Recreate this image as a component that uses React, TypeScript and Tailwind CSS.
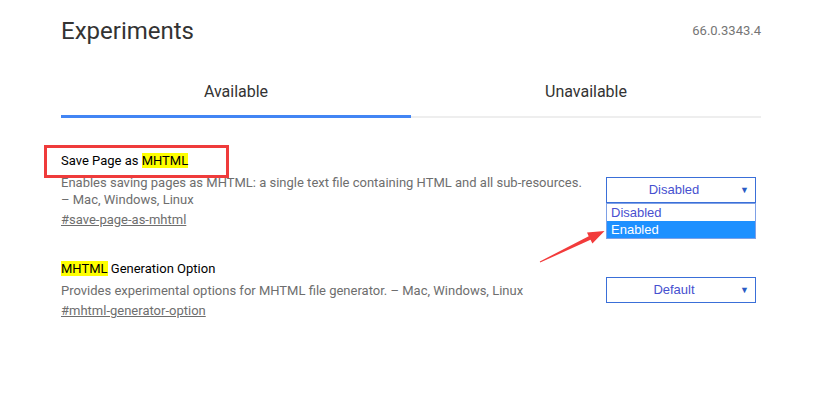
import React from 'react';

const experiments = [
  {
    id: 'save-page-as-mhtml',
    title: (
      <>
        Save Page as <mark className="bg-[#ffff00] text-black">MHTML</mark>
      </>
    ),
    desc: 'Enables saving pages as MHTML: a single text file containing HTML and all sub-resources.',
    value: 'Disabled',
    open: true,
  },
  {
    id: 'mhtml-generator-option',
    title: (
      <>
        <mark className="bg-[#ffff00] text-black">MHTML</mark> Generation Option
      </>
    ),
    desc: 'Provides experimental options for MHTML file generator.',
    value: 'Default',
    open: false,
  },
];

const Select = ({ value, open }: { value: string; open: boolean }) => (
  <div className="relative w-[150px] font-['Liberation_Sans',Arial,sans-serif] text-[13px]">
    <div className="h-[26px] pr-[14px] border-[1.5px] border-[#3a6fd8] bg-white flex items-center justify-center text-[#4650cf]">
      <span>{value}</span>
      <span className="absolute right-[7px] top-[7px] text-[9px] text-[#2a5bc4]">▼</span>
    </div>
    {open && (
      <div className="absolute left-0 top-[26px] w-[150px] border border-[#7ea0e6] bg-white z-10">
        <div className="h-[17px] leading-[17px] px-[4px] text-[#4a4fd0]">Disabled</div>
        <div className="h-[17px] leading-[17px] px-[4px] bg-[#1e90ff] text-white">Enabled</div>
      </div>
    )}
  </div>
);

const App = () => {
  return (
    <div className="relative w-[818px] h-[418px] bg-white font-['Roboto',sans-serif] overflow-hidden">
      <div className="ml-[61px] w-[700px]">
        {/* Header */}
        <div className="pt-[15px] h-[47px] flex items-center justify-between">
          <h1 className="text-[24px] leading-[32px] text-[#333333] font-normal">Experiments</h1>
          <span className="text-[13px] text-[#757575]">66.0.3343.4</span>
        </div>

        {/* Tabs */}
        <div className="flex">
          <div className="flex-1 pt-[35px] pb-[13px] text-center text-[16px] leading-[20px] text-[#333333] border-b-[3px] border-[#4285f4]">
            Available
          </div>
          <div className="flex-1 pt-[35px] pb-[14px] text-center text-[16px] leading-[20px] text-[#333333] border-b-2 border-[#eeeeee]">
            Unavailable
          </div>
        </div>

        {/* Experiments */}
        <div className="mt-[34px] flex flex-col gap-[32px]">
          {experiments.map((exp) => (
            <div key={exp.id} className="flex items-center justify-between">
              <div className="w-[530px]">
                <div className="relative text-[13px] leading-[18px] font-normal text-black">
                  <span>{exp.title}</span>
                  {exp.open && (
                    <div className="absolute left-[-17px] top-[-7px] w-[185px] h-[33px] border-[3px] border-[#ef3b3b]" />
                  )}
                </div>
                <p className="mt-[4px] text-[13px] leading-[17px] text-[#6e6e6e]">
                  {exp.desc} <span>– Mac, Windows, Linux</span>
                </p>
                <a href={`#${exp.id}`} className="block mt-[3px] text-[13px] leading-[17px] text-[#6e6e6e] underline">
                  #{exp.id}
                </a>
              </div>
              <div className="mr-[5px]">
                <Select value={exp.value} open={exp.open} />
              </div>
            </div>
          ))}
        </div>
      </div>

      {/* Annotation arrow */}
      <svg className="absolute left-0 top-0 pointer-events-none z-20" width="818" height="418" viewBox="0 0 818 418">
        <polygon
          points="540.2,262.5 590.5,239.8 592.4,243.6 604.5,231 587,232.4 588.7,236.2 539.8,261.5"
          fill="#f23b3b"
        />
      </svg>
    </div>
  );
};

export default App;
